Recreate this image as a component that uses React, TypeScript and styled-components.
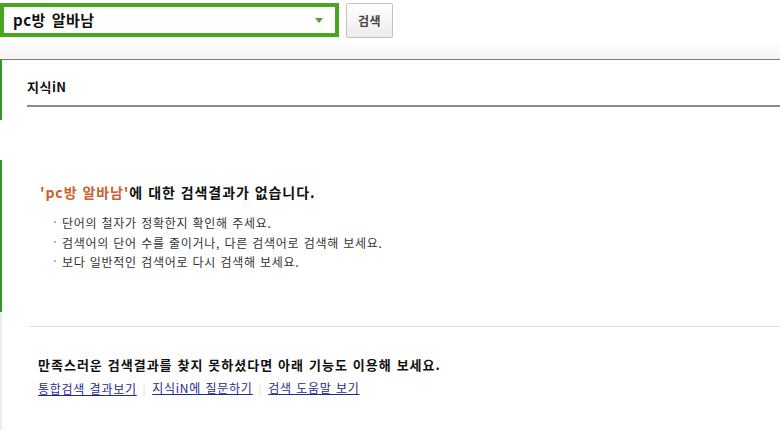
import { FC } from "react";
import styled, { createGlobalStyle } from "styled-components";

const GlobalStyle = createGlobalStyle`
  html, body {
    margin: 0;
    padding: 0;
    background: #fff;
  }
  body {
    font-family: "Noto Sans CJK KR", "Liberation Sans", sans-serif;
    color: #333;
    font-size: 12px;
  }
`;

const Page = styled.div`
  width: 780px;
  height: 430px;
  overflow: hidden;
  display: flex;
  flex-direction: column;
`;

const SearchBar = styled.div`
  height: 60px;
  box-sizing: border-box;
  padding-top: 3px;
  display: flex;
  align-items: flex-start;
  gap: 7px;
  border-bottom: 1px solid #7b7b7b;
  background: linear-gradient(#fff 0%, #fff 70%, #f5f5f5 100%);
`;

const QueryBox = styled.div`
  width: 339px;
  height: 34px;
  box-sizing: border-box;
  border: 4px solid #48a51f;
  background: #fff;
  display: flex;
  align-items: center;
  padding: 0 12px 0 9px;
`;

const QueryText = styled.span`
  flex: 1;
  font-size: 15px;
  font-weight: 700;
  color: #111;
  letter-spacing: 0.5px;
  word-spacing: 2px;
  line-height: 18px;
`;

const Caret = styled.span`
  width: 0;
  height: 0;
  border-left: 4px solid transparent;
  border-right: 4px solid transparent;
  border-top: 5px solid #5a9a32;
`;

const SearchButton = styled.button`
  width: 47px;
  height: 35px;
  box-sizing: border-box;
  border: 1px solid #c2c2c2;
  border-radius: 2px;
  background: linear-gradient(#ffffff, #ececec);
  font-family: inherit;
  font-size: 12px;
  font-weight: 700;
  color: #444;
  padding: 0;
  line-height: 14px;
  letter-spacing: 0.5px;
`;

const Section = styled.section<{ $accent: boolean; $height?: number }>`
  border-left: 2px solid ${(p) => (p.$accent ? "#2f9a24" : "#ececec")};
  ${(p) => (p.$height ? `height: ${p.$height}px;` : "flex: 1;")}
  box-sizing: border-box;
`;

const Spacer = styled.div`
  height: 40px;
`;

const CategoryHead = styled.div`
  margin-left: 25px;
  padding-top: 18px;
  padding-bottom: 9px;
  border-bottom: 2px solid #8a8a8a;
`;

const CategoryTitle = styled.h2`
  margin: 0;
  font-size: 13px;
  font-weight: 700;
  line-height: 18px;
  letter-spacing: 0.5px;
  color: #111;
`;

const NoResult = styled.div`
  padding: 23px 0 0 38px;
`;

const NoResultTitle = styled.h3`
  margin: 0 0 12px;
  font-size: 14px;
  font-weight: 700;
  line-height: 18px;
  letter-spacing: 0.9px;
  word-spacing: 1px;
  color: #111;
`;

const Query = styled.span`
  color: #c8622e;
`;

const TipList = styled.ul`
  list-style: none;
  margin: 0;
  padding: 0 0 0 12px;
`;

const Tip = styled.li`
  position: relative;
  padding-left: 10px;
  font-size: 12px;
  line-height: 19.5px;
  letter-spacing: 0.7px;
  word-spacing: 1px;
  color: #333;

  &::before {
    content: "";
    position: absolute;
    left: 2px;
    top: 8px;
    width: 2px;
    height: 2px;
    background: #b5b5b5;
  }
`;

const Divider = styled.hr`
  margin: 14px 0 0 27px;
  border: 0;
  border-top: 1px solid #e3e3e3;
`;

const Suggest = styled.div`
  padding: 29px 0 0 36px;
`;

const SuggestTitle = styled.p`
  margin: 0 0 5px;
  font-size: 13px;
  font-weight: 700;
  line-height: 18px;
  letter-spacing: 1px;
  word-spacing: 1px;
  color: #111;
`;

const LinkRow = styled.div`
  display: flex;
  align-items: center;
  font-size: 12px;
  line-height: 18px;
  letter-spacing: 0.75px;
  word-spacing: 1px;
`;

const Link = styled.a`
  color: #1f2a8c;
  text-decoration: underline;
`;

const Sep = styled.span`
  color: #d6d6d6;
  font-size: 10px;
  margin: 0 6px;
`;

const tips = [
  "단어의 철자가 정확한지 확인해 주세요.",
  "검색어의 단어 수를 줄이거나, 다른 검색어로 검색해 보세요.",
  "보다 일반적인 검색어로 다시 검색해 보세요.",
];

const links = ["통합검색 결과보기", "지식iN에 질문하기", "검색 도움말 보기"];

const App: FC = () => {
  const query = "pc방 알바남";
  return (
    <>
      <GlobalStyle />
      <Page>
        <SearchBar>
          <QueryBox>
            <QueryText>{query}</QueryText>
            <Caret />
          </QueryBox>
          <SearchButton>검색</SearchButton>
        </SearchBar>

        <Section $accent $height={60}>
          <CategoryHead>
            <CategoryTitle>지식iN</CategoryTitle>
          </CategoryHead>
        </Section>

        <Spacer />

        <Section $accent $height={152}>
          <NoResult>
            <NoResultTitle>
              <Query>'{query}'</Query>에 대한 검색결과가 없습니다.
            </NoResultTitle>
            <TipList>
              {tips.map((t) => (
                <Tip key={t}>{t}</Tip>
              ))}
            </TipList>
          </NoResult>
        </Section>

        <Section $accent={false}>
          <Divider />
          <Suggest>
            <SuggestTitle>
              만족스러운 검색결과를 찾지 못하셨다면 아래 기능도 이용해 보세요.
            </SuggestTitle>
            <LinkRow>
              {links.map((l, i) => (
                <span key={l}>
                  {i > 0 && <Sep>|</Sep>}
                  <Link href="#">{l}</Link>
                </span>
              ))}
            </LinkRow>
          </Suggest>
        </Section>
      </Page>
    </>
  );
};

export default App;
